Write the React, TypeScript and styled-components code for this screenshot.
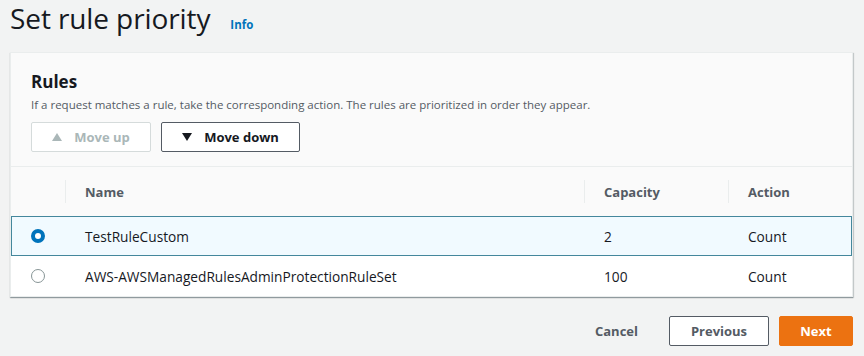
import React, { useState } from 'react';
import styled, { createGlobalStyle } from 'styled-components';

const GlobalStyle = createGlobalStyle`
  html, body {
    margin: 0;
    padding: 0;
    background: #f2f3f3;
    font-family: "Open Sans", "Liberation Sans", Arial, sans-serif;
    color: #16191f;
  }
`;

const Page = styled.div`
  width: 864px;
  height: 356px;
  box-sizing: border-box;
  padding: 0 11px 0 10px;
  display: flex;
  flex-direction: column;
  overflow: hidden;
`;

const Header = styled.div`
  display: flex;
  align-items: baseline;
  gap: 20px;
  height: 52px;
  padding-top: 1px;
  box-sizing: border-box;
`;

const Title = styled.h1`
  margin: 0;
  font-size: 28px;
  font-weight: 400;
  letter-spacing: -0.1px;
  line-height: 34px;
`;

const InfoLink = styled.a`
  font-size: 11.5px;
  font-weight: 700;
  color: #0073bb;
  text-decoration: none;
`;

const Card = styled.div`
  width: 843px;
  box-sizing: border-box;
  background: #fafafa;
  border: 1px solid #eaeded;
  box-shadow: 0 1px 1px 0 rgba(0, 28, 36, 0.3), 1px 1px 1px 0 rgba(0, 28, 36, 0.15);
  overflow: hidden;
`;

const CardHead = styled.div`
  padding: 18px 20px 14px 20px;
  border-bottom: 1px solid #eaeded;
`;

const CardTitle = styled.h2`
  margin: 0;
  font-size: 17px;
  font-weight: 700;
  line-height: 22px;
`;

const Description = styled.p`
  margin: 4px 0 9px;
  font-size: 11.5px;
  line-height: 16px;
  color: #545b64;
`;

const Actions = styled.div`
  display: flex;
  gap: 10px;
`;

const Button = styled.button<{ $disabled?: boolean; $primary?: boolean; $dark?: boolean }>`
  display: inline-flex;
  align-items: center;
  justify-content: center;
  gap: 12px;
  height: 30px;
  box-sizing: border-box;
  padding: 0 18px;
  font-family: inherit;
  font-size: 13px;
  font-weight: 700;
  border-radius: 2px;
  cursor: ${p => (p.$disabled ? 'default' : 'pointer')};
  background: ${p => (p.$primary ? '#ec7211' : '#ffffff')};
  color: ${p => (p.$primary ? '#ffffff' : p.$disabled ? '#aab7b8' : p.$dark ? '#16191f' : '#545b64')};
  border: 1px solid ${p => (p.$primary ? '#ec7211' : p.$disabled ? '#d5dbdb' : '#545b64')};
`;

const Triangle = styled.span<{ $up?: boolean; $disabled?: boolean }>`
  width: 0;
  height: 0;
  border-left: 5px solid transparent;
  border-right: 5px solid transparent;
  ${p => (p.$up ? 'border-bottom' : 'border-top')}: 8px solid ${p => (p.$disabled ? '#aab7b8' : '#16191f')};
`;

const Table = styled.table`
  width: 841px;
  table-layout: fixed;
  border-collapse: collapse;
  font-size: 13.7px;
`;

const HeadCell = styled.th<{ $sep?: boolean }>`
  height: 49px;
  padding: 0 20px;
  text-align: left;
  font-size: 13px;
  font-weight: 700;
  color: #545b64;
  position: relative;
  &::before {
    content: '';
    display: ${p => (p.$sep ? 'block' : 'none')};
    position: absolute;
    left: 0;
    top: 13px;
    bottom: 13px;
    border-left: 1px solid #eaeded;
  }
`;

const Row = styled.tr<{ $selected?: boolean }>`
  background: ${p => (p.$selected ? '#f1faff' : '#ffffff')};
  outline: ${p => (p.$selected ? '1px solid #44879c' : 'none')};
  outline-offset: -1px;
`;

const Cell = styled.td`
  height: 40px;
  padding: 0 20px;
  color: #16191f;
  white-space: nowrap;
`;

const RadioCell = styled.td`
  height: 40px;
  padding: 0 20px;
`;

const Radio = styled.span<{ $checked?: boolean }>`
  display: block;
  width: 14px;
  height: 14px;
  box-sizing: border-box;
  border-radius: 50%;
  background: #ffffff;
  border: ${p => (p.$checked ? '4px solid #0073bb' : '1.5px solid #879596')};
`;

const Footer = styled.div`
  display: flex;
  justify-content: flex-end;
  align-items: center;
  gap: 10px;
  padding-top: 19px;
`;

const LinkButton = styled.button`
  background: none;
  border: none;
  font-family: inherit;
  font-size: 13px;
  font-weight: 700;
  color: #545b64;
  padding: 0 21px;
  height: 30px;
`;

type Rule = { name: string; capacity: number; action: string };

const rules: Rule[] = [
  { name: 'TestRuleCustom', capacity: 2, action: 'Count' },
  { name: 'AWS-AWSManagedRulesAdminProtectionRuleSet', capacity: 100, action: 'Count' },
];

export default function App() {
  const [selected, setSelected] = useState(0);

  return (
    <>
      <GlobalStyle />
      <Page>
        <Header>
          <Title>Set rule priority</Title>
          <InfoLink href="#">Info</InfoLink>
        </Header>
        <Card>
          <CardHead>
            <CardTitle>Rules</CardTitle>
            <Description>
              If a request matches a rule, take the corresponding action. The rules are prioritized in order they appear.
            </Description>
            <Actions>
              <Button $disabled style={{ width: 120 }}>
                <Triangle $up $disabled />
                Move up
              </Button>
              <Button $dark style={{ width: 139 }}>
                <Triangle />
                Move down
              </Button>
            </Actions>
          </CardHead>
          <Table>
            <colgroup>
              <col style={{ width: 54 }} />
              <col style={{ width: 519 }} />
              <col style={{ width: 144 }} />
              <col style={{ width: 124 }} />
            </colgroup>
            <thead>
              <tr>
                <HeadCell />
                <HeadCell $sep>Name</HeadCell>
                <HeadCell $sep>Capacity</HeadCell>
                <HeadCell $sep>Action</HeadCell>
              </tr>
            </thead>
            <tbody>
              {rules.map((r, i) => (
                <Row key={r.name} $selected={selected === i} onClick={() => setSelected(i)}>
                  <RadioCell>
                    <Radio $checked={selected === i} />
                  </RadioCell>
                  <Cell>{r.name}</Cell>
                  <Cell>{r.capacity}</Cell>
                  <Cell>{r.action}</Cell>
                </Row>
              ))}
            </tbody>
          </Table>
        </Card>
        <Footer>
          <LinkButton>Cancel</LinkButton>
          <Button style={{ width: 100 }}>Previous</Button>
          <Button $primary style={{ width: 74 }}>Next</Button>
        </Footer>
      </Page>
    </>
  );
}
